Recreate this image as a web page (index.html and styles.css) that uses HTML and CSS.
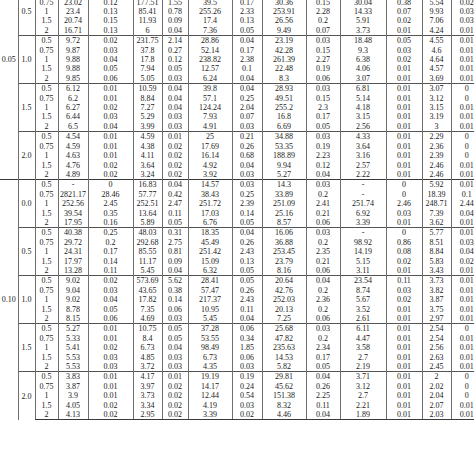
FILE: index.html
```html
<!DOCTYPE html>
<html>
<head>
<meta charset="utf-8">
<link rel="stylesheet" href="styles.css">
</head>
<body>
<div class="wrap">
<table class="tbl">
<colgroup>
<col class="w0"><col class="w1"><col class="w2"><col class="w3"><col class="w4"><col class="w5"><col class="w6"><col class="w7"><col class="w8"><col class="w9"><col class="w10"><col class="w11"><col class="w12"><col class="w13"><col class="w14">
</colgroup>
<tbody>
<tr class="blk"><td class="c0" rowspan="5"></td><td class="c1" rowspan="5">0.5</td><td>0.5</td><td></td><td></td><td></td><td></td><td></td><td></td><td></td><td></td><td></td><td></td><td></td><td></td></tr>
<tr><td>0.75</td><td>23.02</td><td>0.12</td><td>177.51</td><td>1.55</td><td>39.5</td><td>0.17</td><td>30.36</td><td>0.15</td><td>30.04</td><td>0.38</td><td>5.54</td><td>0.02</td></tr>
<tr><td>1</td><td>23.4</td><td>0.13</td><td>85.41</td><td>0.78</td><td>255.26</td><td>2.33</td><td>253.91</td><td>2.28</td><td>14.33</td><td>0.07</td><td>9.93</td><td>0.03</td></tr>
<tr><td>1.5</td><td>20.74</td><td>0.15</td><td>11.93</td><td>0.09</td><td>17.4</td><td>0.13</td><td>26.56</td><td>0.2</td><td>5.91</td><td>0.02</td><td>7.06</td><td>0.03</td></tr>
<tr><td>2</td><td>16.71</td><td>0.13</td><td>6</td><td>0.04</td><td>7.36</td><td>0.05</td><td>9.49</td><td>0.07</td><td>3.73</td><td>0.01</td><td>4.24</td><td>0.01</td></tr>

<tr class="blk"><td class="c0" rowspan="5">0.05</td><td class="c1" rowspan="5">1.0</td><td>0.5</td><td>9.72</td><td>0.02</td><td>231.75</td><td>2.14</td><td>28.86</td><td>0.04</td><td>23.19</td><td>0.03</td><td>18.48</td><td>0.05</td><td>4.55</td><td>0.01</td></tr>
<tr><td>0.75</td><td>9.87</td><td>0.03</td><td>37.8</td><td>0.27</td><td>52.14</td><td>0.17</td><td>42.28</td><td>0.15</td><td>9.3</td><td>0.03</td><td>4.6</td><td>0.01</td></tr>
<tr><td>1</td><td>9.88</td><td>0.04</td><td>17.8</td><td>0.12</td><td>238.82</td><td>2.38</td><td>261.39</td><td>2.27</td><td>6.38</td><td>0.02</td><td>4.64</td><td>0.01</td></tr>
<tr><td>1.5</td><td>9.88</td><td>0.05</td><td>7.94</td><td>0.05</td><td>12.57</td><td>0.1</td><td>22.48</td><td>0.19</td><td>4.06</td><td>0.01</td><td>4.57</td><td>0.01</td></tr>
<tr><td>2</td><td>9.85</td><td>0.06</td><td>5.05</td><td>0.03</td><td>6.24</td><td>0.04</td><td>8.3</td><td>0.06</td><td>3.07</td><td>0.01</td><td>3.69</td><td>0.01</td></tr>

<tr class="blk"><td class="c0" rowspan="5"></td><td class="c1" rowspan="5">1.5</td><td>0.5</td><td>6.12</td><td>0.01</td><td>10.59</td><td>0.04</td><td>39.8</td><td>0.04</td><td>28.93</td><td>0.03</td><td>6.81</td><td>0.01</td><td>3.07</td><td>0</td></tr>
<tr><td>0.75</td><td>6.2</td><td>0.01</td><td>8.84</td><td>0.04</td><td>57.1</td><td>0.25</td><td>49.51</td><td>0.15</td><td>5.14</td><td>0.01</td><td>3.12</td><td>0</td></tr>
<tr><td>1</td><td>6.27</td><td>0.02</td><td>7.27</td><td>0.04</td><td>124.24</td><td>2.04</td><td>255.2</td><td>2.3</td><td>4.18</td><td>0.01</td><td>3.15</td><td>0.01</td></tr>
<tr><td>1.5</td><td>6.44</td><td>0.03</td><td>5.29</td><td>0.03</td><td>7.93</td><td>0.07</td><td>16.8</td><td>0.17</td><td>3.15</td><td>0.01</td><td>3.19</td><td>0.01</td></tr>
<tr><td>2</td><td>6.5</td><td>0.04</td><td>3.99</td><td>0.03</td><td>4.91</td><td>0.03</td><td>6.69</td><td>0.05</td><td>2.56</td><td>0.01</td><td>3</td><td>0.01</td></tr>

<tr class="blk"><td class="c0" rowspan="5"></td><td class="c1" rowspan="5">2.0</td><td>0.5</td><td>4.54</td><td>0.01</td><td>4.59</td><td>0.01</td><td>25</td><td>0.21</td><td>34.88</td><td>0.03</td><td>4.33</td><td>0.01</td><td>2.29</td><td>0</td></tr>
<tr><td>0.75</td><td>4.59</td><td>0.01</td><td>4.38</td><td>0.02</td><td>17.69</td><td>0.26</td><td>53.35</td><td>0.19</td><td>3.64</td><td>0.01</td><td>2.36</td><td>0</td></tr>
<tr><td>1</td><td>4.63</td><td>0.01</td><td>4.11</td><td>0.02</td><td>16.14</td><td>0.68</td><td>188.89</td><td>2.23</td><td>3.16</td><td>0.01</td><td>2.39</td><td>0</td></tr>
<tr><td>1.5</td><td>4.76</td><td>0.02</td><td>3.64</td><td>0.02</td><td>4.92</td><td>0.04</td><td>9.94</td><td>0.12</td><td>2.57</td><td>0.01</td><td>2.46</td><td>0.01</td></tr>
<tr><td>2</td><td>4.89</td><td>0.02</td><td>3.24</td><td>0.02</td><td>3.92</td><td>0.03</td><td>5.27</td><td>0.04</td><td>2.22</td><td>0.01</td><td>2.46</td><td>0.01</td></tr>

<tr class="blk grp"><td class="c0" rowspan="5"></td><td class="c1" rowspan="5">0.0</td><td>0.5</td><td>-</td><td>0</td><td>16.83</td><td>0.04</td><td>14.57</td><td>0.03</td><td>14.3</td><td>0.03</td><td>-</td><td>0</td><td>5.92</td><td>0.01</td></tr>
<tr><td>0.75</td><td>2821.17</td><td>28.46</td><td>57.77</td><td>0.42</td><td>38.43</td><td>0.25</td><td>33.89</td><td>0.2</td><td>-</td><td>0</td><td>18.39</td><td>0.1</td></tr>
<tr><td>1</td><td>252.56</td><td>2.45</td><td>252.51</td><td>2.47</td><td>251.72</td><td>2.39</td><td>251.09</td><td>2.41</td><td>251.74</td><td>2.46</td><td>248.71</td><td>2.44</td></tr>
<tr><td>1.5</td><td>39.54</td><td>0.35</td><td>13.64</td><td>0.11</td><td>17.03</td><td>0.14</td><td>25.16</td><td>0.21</td><td>6.92</td><td>0.03</td><td>7.39</td><td>0.04</td></tr>
<tr><td>2</td><td>17.95</td><td>0.16</td><td>5.89</td><td>0.05</td><td>6.76</td><td>0.05</td><td>8.57</td><td>0.06</td><td>3.39</td><td>0.01</td><td>3.62</td><td>0.01</td></tr>

<tr class="blk"><td class="c0" rowspan="5"></td><td class="c1" rowspan="5">0.5</td><td>0.5</td><td>40.38</td><td>0.25</td><td>48.03</td><td>0.31</td><td>18.35</td><td>0.04</td><td>16.06</td><td>0.03</td><td>-</td><td>0</td><td>5.77</td><td>0.01</td></tr>
<tr><td>0.75</td><td>29.72</td><td>0.2</td><td>292.68</td><td>2.75</td><td>45.49</td><td>0.26</td><td>36.88</td><td>0.2</td><td>98.92</td><td>0.86</td><td>8.51</td><td>0.03</td></tr>
<tr><td>1</td><td>24.31</td><td>0.17</td><td>85.55</td><td>0.81</td><td>251.42</td><td>2.43</td><td>253.45</td><td>2.35</td><td>14.19</td><td>0.08</td><td>8.84</td><td>0.04</td></tr>
<tr><td>1.5</td><td>17.97</td><td>0.14</td><td>11.17</td><td>0.09</td><td>15.09</td><td>0.13</td><td>23.79</td><td>0.21</td><td>5.15</td><td>0.02</td><td>5.83</td><td>0.02</td></tr>
<tr><td>2</td><td>13.28</td><td>0.11</td><td>5.45</td><td>0.04</td><td>6.32</td><td>0.05</td><td>8.16</td><td>0.06</td><td>3.11</td><td>0.01</td><td>3.43</td><td>0.01</td></tr>

<tr class="blk"><td class="c0" rowspan="5">0.10</td><td class="c1" rowspan="5">1.0</td><td>0.5</td><td>9.02</td><td>0.02</td><td>573.69</td><td>5.62</td><td>28.41</td><td>0.05</td><td>20.64</td><td>0.04</td><td>23.54</td><td>0.11</td><td>3.73</td><td>0.01</td></tr>
<tr><td>0.75</td><td>9.04</td><td>0.03</td><td>43.65</td><td>0.38</td><td>57.47</td><td>0.26</td><td>42.76</td><td>0.2</td><td>8.74</td><td>0.03</td><td>3.82</td><td>0.01</td></tr>
<tr><td>1</td><td>9.02</td><td>0.04</td><td>17.82</td><td>0.14</td><td>217.37</td><td>2.43</td><td>252.03</td><td>2.36</td><td>5.67</td><td>0.02</td><td>3.87</td><td>0.01</td></tr>
<tr><td>1.5</td><td>8.78</td><td>0.05</td><td>7.35</td><td>0.06</td><td>10.95</td><td>0.11</td><td>20.13</td><td>0.2</td><td>3.52</td><td>0.01</td><td>3.75</td><td>0.01</td></tr>
<tr><td>2</td><td>8.15</td><td>0.06</td><td>4.69</td><td>0.03</td><td>5.45</td><td>0.04</td><td>7.25</td><td>0.06</td><td>2.61</td><td>0.01</td><td>2.97</td><td>0.01</td></tr>

<tr class="blk"><td class="c0" rowspan="5"></td><td class="c1" rowspan="5">1.5</td><td>0.5</td><td>5.27</td><td>0.01</td><td>10.75</td><td>0.05</td><td>37.28</td><td>0.06</td><td>25.68</td><td>0.03</td><td>6.11</td><td>0.01</td><td>2.54</td><td>0</td></tr>
<tr><td>0.75</td><td>5.33</td><td>0.01</td><td>8.4</td><td>0.05</td><td>53.55</td><td>0.34</td><td>47.82</td><td>0.2</td><td>4.47</td><td>0.01</td><td>2.54</td><td>0.01</td></tr>
<tr><td>1</td><td>5.41</td><td>0.02</td><td>6.73</td><td>0.04</td><td>98.49</td><td>1.85</td><td>235.63</td><td>2.34</td><td>3.58</td><td>0.01</td><td>2.56</td><td>0.01</td></tr>
<tr><td>1.5</td><td>5.53</td><td>0.03</td><td>4.85</td><td>0.03</td><td>6.73</td><td>0.06</td><td>14.53</td><td>0.17</td><td>2.7</td><td>0.01</td><td>2.63</td><td>0.01</td></tr>
<tr><td>2</td><td>5.53</td><td>0.03</td><td>3.72</td><td>0.03</td><td>4.35</td><td>0.03</td><td>5.82</td><td>0.05</td><td>2.19</td><td>0.01</td><td>2.45</td><td>0.01</td></tr>

<tr class="blk"><td class="c0" rowspan="5"></td><td class="c1" rowspan="5">2.0</td><td>0.5</td><td>3.83</td><td>0.01</td><td>4.17</td><td>0.01</td><td>19.19</td><td>0.19</td><td>29.81</td><td>0.04</td><td>3.71</td><td>0.01</td><td>2</td><td>0</td></tr>
<tr><td>0.75</td><td>3.87</td><td>0.01</td><td>3.97</td><td>0.02</td><td>14.17</td><td>0.24</td><td>45.62</td><td>0.26</td><td>3.12</td><td>0.01</td><td>2.02</td><td>0</td></tr>
<tr><td>1</td><td>3.9</td><td>0.01</td><td>3.73</td><td>0.02</td><td>12.44</td><td>0.54</td><td>151.38</td><td>2.25</td><td>2.7</td><td>0.01</td><td>2.04</td><td>0</td></tr>
<tr><td>1.5</td><td>4.05</td><td>0.02</td><td>3.34</td><td>0.02</td><td>4.19</td><td>0.03</td><td>8.32</td><td>0.11</td><td>2.21</td><td>0.01</td><td>2.07</td><td>0.01</td></tr>
<tr class="last"><td>2</td><td>4.13</td><td>0.02</td><td>2.95</td><td>0.02</td><td>3.39</td><td>0.02</td><td>4.46</td><td>0.04</td><td>1.89</td><td>0.01</td><td>2.03</td><td>0.01</td></tr>
</tbody>
</table>
</div>
</body>
</html>
```

FILE: styles.css
```css
html, body {
  margin: 0;
  padding: 0;
  background: #ffffff;
  overflow: hidden;
}

.wrap {
  width: 474px;
  height: 474px;
  overflow: hidden;
}

.tbl {
  margin-top: -13px;
  border-collapse: collapse;
  table-layout: fixed;
  width: 482px;
  font-family: "Liberation Serif", "Times New Roman", serif;
  font-size: 8px;
  color: #1a1a1a;
}

.w0 { width: 18px; }
.w1 { width: 17px; }
.w2 { width: 23px; }
.w3 { width: 30px; }
.w4 { width: 45px; }
.w5 { width: 29px; }
.w6 { width: 26px; }
.w7 { width: 44px; }
.w8 { width: 30px; }
.w9 { width: 44px; }
.w10 { width: 34px; }
.w11 { width: 46px; }
.w12 { width: 36px; }
.w13 { width: 29px; }
.w14 { width: 31px; }

.tbl td {
  padding: 0;
  height: 9.42px;
  line-height: 9px;
  text-align: center;
  white-space: nowrap;
  overflow: hidden;
  border-left: 1px solid #6e6e6e;
}

.tbl tr.blk td {
  border-top: 1px solid #555555;
}

.tbl td.c0 {
  border-left: none;
}

.tbl tr.blk td.c0 {
  border-top: none;
}

.tbl tr.grp td,
.tbl tr.grp td.c0 {
  border-top: 1px solid #3a3a3a;
}

.tbl tr.last td {
  border-bottom: 1px solid #3a3a3a;
}

.tbl tbody tr:last-child td.c0 {
  border-bottom: 1px solid #3a3a3a;
}
```
